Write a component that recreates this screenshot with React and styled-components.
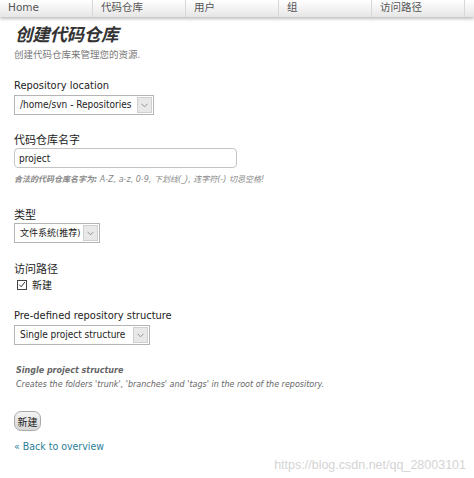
import React from 'react'
import styled, { createGlobalStyle } from 'styled-components'

const GlobalStyle = createGlobalStyle`
    body {
        margin: 0;
        background: #fff;
        font-family: "DejaVu Sans Condensed", "DejaVu Sans", "Noto Sans CJK SC", sans-serif;
        color: #222;
    }
`

const NAV_ITEMS = ['Home', '代码仓库', '用户', '组', '访问路径']

const Chevron = () => (
    <svg width="7" height="5" viewBox="0 0 7 5">
        <path d="M0.5 0.8 L3.5 3.8 L6.5 0.8" fill="none" stroke="#888" strokeWidth="0.9" />
    </svg>
)

const Select = ({ value, width, small }) => (
    <SelectBox width={width}>
        <SelectValue small={small}>{value}</SelectValue>
        <SelectArrow><Chevron /></SelectArrow>
    </SelectBox>
)

export default function App() {
    return (
        <>
            <GlobalStyle />
            <Nav>
                {NAV_ITEMS.map((item) => (
                    <NavItem key={item}>{item}</NavItem>
                ))}
            </Nav>
            <Page>
                <Title>创建代码仓库</Title>
                <Subtitle>创建代码仓库来管理您的资源.</Subtitle>

                <Field space={19}>
                    <Label>Repository location</Label>
                    <Select value="/home/svn - Repositories" width={140} />
                </Field>

                <Field space={19}>
                    <Label cjk>代码仓库名字</Label>
                    <TextInput defaultValue="project" />
                    <Hint>
                        <b>合法的代码仓库名字为:</b> A-Z, a-z, 0-9, 下划线(_), 连字符(-) 切忌空格!
                    </Hint>
                </Field>

                <Field space={25}>
                    <Label cjk>类型</Label>
                    <Select value="文件系统(推荐)" width={86} small />
                </Field>

                <Field space={20}>
                    <Label cjk>访问路径</Label>
                    <CheckRow>
                        <Checkbox>
                            <svg width="9" height="9" viewBox="0 0 9 9">
                                <path d="M1.3 4.6 L3.6 7 L7.8 1.6" fill="none" stroke="#333" strokeWidth="1.1" />
                            </svg>
                        </Checkbox>
                        新建
                    </CheckRow>
                </Field>

                <Field space={17}>
                    <Label>Pre-defined repository structure</Label>
                    <Select value="Single project structure" width={136} />
                </Field>

                <StructureInfo>
                    <StructureName>Single project structure</StructureName>
                    <StructureDesc>Creates the folders 'trunk', 'branches' and 'tags' in the root of the repository.</StructureDesc>
                </StructureInfo>

                <SubmitButton>新建</SubmitButton>
                <BackLink href="#">« Back to overview</BackLink>
            </Page>
            <Watermark>https://blog.csdn.net/qq_28003101</Watermark>
        </>
    )
}

const Nav = styled.div`
    display: grid;
    grid-template-columns: repeat(5, 93px);
    height: 17px;
    background: linear-gradient(#ffffff, #e6e6e6);
    box-shadow: 0 2px 3px rgba(0, 0, 0, 0.25);
`

const NavItem = styled.div`
    padding-left: 8px;
    font-size: 10.5px;
    line-height: 15px;
    color: #555;
    border-right: 1px solid #d8d8d8;
    font-family: "DejaVu Sans", "Noto Sans CJK SC", sans-serif;
`

const Page = styled.div`
    padding: 4px 14px 0;
    display: flex;
    flex-direction: column;
    align-items: flex-start;
`

const Title = styled.h1`
    margin: 1px 0 0 1px;
    font-family: "Noto Sans CJK SC", serif;
    font-style: italic;
    font-weight: 700;
    font-size: 17.5px;
    line-height: 24px;
    color: #333;
    letter-spacing: -0.3px;
`

const Subtitle = styled.div`
    font-family: "Noto Sans CJK SC", sans-serif;
    font-size: 9.5px;
    color: #777;
    line-height: 12px;
    margin-top: 2px;
`

const Field = styled.div`
    display: flex;
    flex-direction: column;
    align-items: flex-start;
    margin-top: ${(p) => p.space}px;
`

const Label = styled.div`
    font-size: 11px;
    line-height: 14px;
    color: #222;
    margin-bottom: ${(p) => (p.cjk ? 0 : 2)}px;
`

const SelectBox = styled.div`
    display: flex;
    width: ${(p) => p.width}px;
    height: 20px;
    box-sizing: border-box;
    border: 1px solid #b4b4b4;
    background: #fff;
`

const SelectValue = styled.div`
    flex: 1;
    font-size: ${(p) => (p.small ? 9 : 10)}px;
    line-height: 18px;
    padding-left: 5px;
    white-space: nowrap;
    overflow: hidden;
`

const SelectArrow = styled.div`
    width: 13px;
    margin: 1px;
    border: 1px solid #cfcfcf;
    background: #e8e8e8;
    display: flex;
    align-items: center;
    justify-content: center;
`

const TextInput = styled.input`
    width: 223px;
    height: 20px;
    box-sizing: border-box;
    border: 1px solid #c4c4c4;
    border-radius: 4px;
    padding: 0 4px;
    margin: 0;
    font-family: "DejaVu Sans Condensed", "DejaVu Sans", sans-serif;
    font-size: 10px;
    color: #222;
    outline: none;
`

const Hint = styled.div`
    margin-top: 5px;
    font-family: "DejaVu Sans", "Noto Sans CJK SC", sans-serif;
    font-size: 8px;
    font-style: italic;
    color: #888;
    b {
        font-weight: 700;
    }
`

const CheckRow = styled.div`
    display: flex;
    align-items: center;
    gap: 5px;
    font-size: 10px;
    margin: 0 0 0 3px;
`

const Checkbox = styled.span`
    width: 10px;
    height: 10px;
    box-sizing: border-box;
    border: 1px solid #444;
    display: flex;
    align-items: center;
    justify-content: center;
`

const StructureInfo = styled.div`
    margin: 21px 0 0 2px;
    font-family: "DejaVu Sans", sans-serif;
    font-style: italic;
    font-size: 8px;
    color: #666;
`

const StructureName = styled.div`
    font-weight: 700;
    line-height: 10px;
`

const StructureDesc = styled.div`
    margin-top: 4px;
    line-height: 10px;
`

const SubmitButton = styled.button`
    margin-top: 21px;
    height: 20px;
    width: 27px;
    padding: 0;
    border: 1px solid #aaa;
    border-radius: 7px;
    background: linear-gradient(#f4f4f4, #d6d6d6);
    font-family: "Noto Sans CJK SC", sans-serif;
    font-size: 10px;
    color: #222;
`

const BackLink = styled.a`
    margin-top: 9px;
    font-size: 10.5px;
    color: #2d7f9a;
    text-decoration: none;
`

const Watermark = styled.div`
    text-align: right;
    padding-right: 8px;
    margin-top: 6px;
    font-family: "Liberation Sans", sans-serif;
    font-size: 12.5px;
    color: #d4d4d4;
`
